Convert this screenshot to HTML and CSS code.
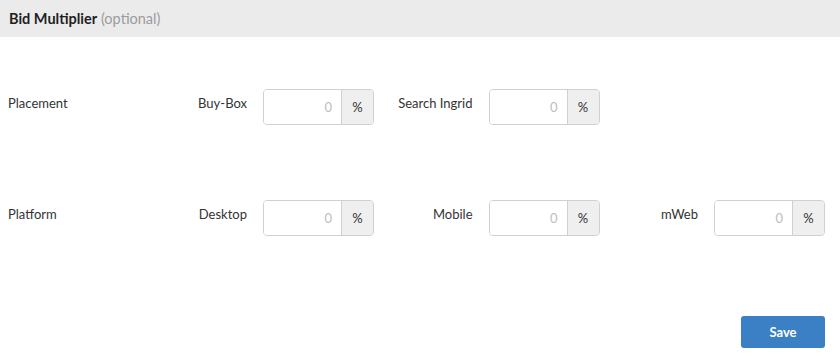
FILE: index.html
```html
<!DOCTYPE html>
<html>
<head>
<meta charset="utf-8">
<link rel="stylesheet" href="styles.css">
</head>
<body>
<div class="panel">
  <div class="panel-header">
    <span class="title">Bid Multiplier</span> <span class="optional">(optional)</span>
  </div>
  <div class="panel-body">
    <div class="row">
      <div class="category">Placement</div>
      <div class="cell">
        <label class="field-label">Buy-Box</label>
        <div class="input-group"><input class="num" type="text" placeholder="0"><span class="addon">%</span></div>
      </div>
      <div class="cell">
        <label class="field-label">Search Ingrid</label>
        <div class="input-group"><input class="num" type="text" placeholder="0"><span class="addon">%</span></div>
      </div>
      <div class="cell"></div>
    </div>
    <div class="row">
      <div class="category">Platform</div>
      <div class="cell">
        <label class="field-label">Desktop</label>
        <div class="input-group"><input class="num" type="text" placeholder="0"><span class="addon">%</span></div>
      </div>
      <div class="cell">
        <label class="field-label">Mobile</label>
        <div class="input-group"><input class="num" type="text" placeholder="0"><span class="addon">%</span></div>
      </div>
      <div class="cell">
        <label class="field-label">mWeb</label>
        <div class="input-group"><input class="num" type="text" placeholder="0"><span class="addon">%</span></div>
      </div>
    </div>
    <div class="footer">
      <button class="btn-save" type="button">Save</button>
    </div>
  </div>
</div>
</body>
</html>
```
FILE: styles.css
```css
* { box-sizing: border-box; }
html, body { margin: 0; padding: 0; background: #fff; }
body {
  font-family: Lato, "Open Sans", Arial, sans-serif;
  color: #333;
  width: 840px;
  height: 362px;
  overflow: hidden;
}
.panel-header {
  height: 37px;
  background: #ebebec;
  padding: 9px 9px 0;
  font-size: 14.5px;
  line-height: 20px;
}
.title { font-weight: 700; color: #1f1f1f; }
.optional { color: #9b9b9b; font-weight: 400; }
.panel-body {
  padding: 52px 15px 0 8px;
}
.row {
  display: grid;
  grid-template-columns: 140.5px repeat(3, 225.5px);
  height: 36px;
  margin-bottom: 75px;
}
.row:nth-child(2) { margin-bottom: 80px; }
.category {
  font-size: 13px;
  line-height: 16px;
  padding-top: 6px;
  color: #333;
}
.cell {
  display: flex;
  justify-content: flex-end;
  align-items: flex-start;
  gap: 16px;
}
.field-label {
  font-size: 13px;
  line-height: 16px;
  padding-top: 6px;
  color: #333;
}
.input-group {
  display: flex;
  width: 111px;
  height: 36px;
  border: 1px solid #d0d0d0;
  border-radius: 4px;
  overflow: hidden;
}
.num {
  width: 78px;
  border: 0;
  border-right: 1px solid #d0d0d0;
  outline: none;
  padding: 0 9px;
  text-align: right;
  font-family: inherit;
  font-size: 13px;
  color: #333;
  background: #fff;
}
.num::placeholder { color: #bdbdbd; }
.addon {
  flex: 1;
  display: flex;
  align-items: center;
  justify-content: center;
  background: #efefef;
  font-size: 13px;
  color: #333;
}
.footer {
  display: flex;
  justify-content: flex-end;
}
.btn-save {
  width: 84px;
  height: 32px;
  border: 0;
  border-radius: 3px;
  background: #3b7fc4;
  color: #fff;
  font-family: inherit;
  font-weight: 700;
  font-size: 13px;
}
```
